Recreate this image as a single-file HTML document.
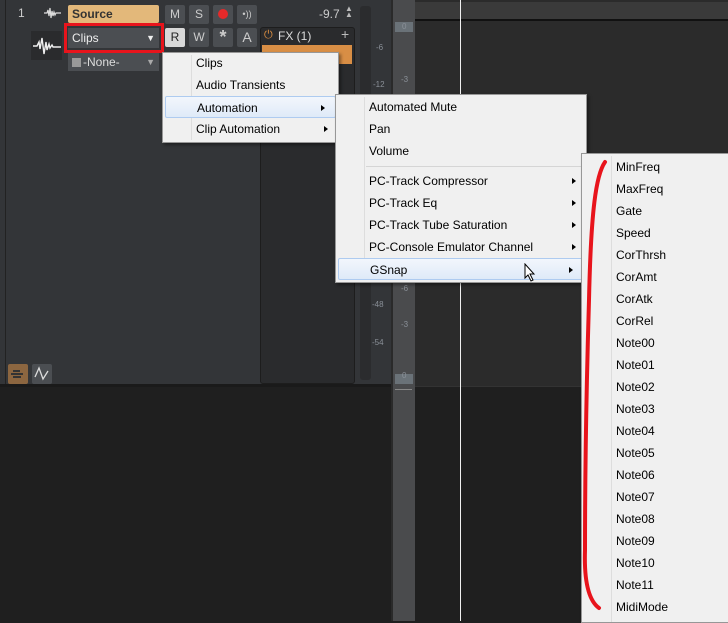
<!DOCTYPE html>
<html><head><style>
*{margin:0;padding:0;box-sizing:border-box}
body{width:728px;height:621px;background:#1f1f1f;position:relative;overflow:hidden;font-family:"Liberation Sans","Noto Sans CJK KR",sans-serif}
.a{position:absolute}
.menu{position:absolute;background:#f0f0f0;border:1px solid #979797;box-shadow:2px 2px 3px rgba(0,0,0,.4);font-size:12px;color:#000}
.menu .it{position:absolute;left:0;right:0;height:22px;line-height:22px}
.menu .hl{background:linear-gradient(#f2f6fc,#dfeaf8);border:1px solid #aecbf0;border-radius:2px}
.arr{position:absolute;right:10px;top:8px;width:0;height:0;border-left:4px solid #000;border-top:3.5px solid transparent;border-bottom:3.5px solid transparent}
.btn{position:absolute;width:20px;height:19px;background:#4b4e52;color:#ccc;font-size:12px;text-align:center;line-height:19px;border-radius:2px}
.sc{position:absolute;font-size:8px;color:#8a9098}
</style></head><body>
<div class="a" style="left:0;top:0;width:391px;height:386px;background:#333538"></div>
<div class="a" style="left:5px;top:0;width:1px;height:386px;background:#222"></div>
<div class="a" style="left:0;top:384px;width:391px;height:3px;background:#1a1a1a"></div>
<div class="a" style="left:18px;top:6px;color:#ccc;font-size:12px">1</div>
<svg class="a" style="left:44px;top:6px" width="18" height="14" viewBox="0 0 18 14"><path d="M0 7h3l1-3 1 6 1-8 1 10 1-7 1 5 1-4 1 3 1-2h5" stroke="#ddd" fill="none" stroke-width="1.2"/></svg>
<div class="a" style="left:68px;top:5px;width:91px;height:18px;background:#e3b87a;border-radius:2px;font-size:12px;font-weight:bold;color:#333;line-height:18px;padding-left:4px">Source</div>
<div class="btn" style="left:165px;top:5px">M</div>
<div class="btn" style="left:189px;top:5px">S</div>
<div class="btn" style="left:213px;top:5px"><span style="display:inline-block;width:10px;height:10px;border-radius:50%;background:#e52a2a;margin-top:4px"></span></div>
<div class="btn" style="left:237px;top:5px;font-size:9px">•))</div>
<div class="a" style="left:319px;top:7px;color:#ccc;font-size:12px">-9.7</div>
<div class="a" style="left:345px;top:6px;color:#bbb;font-size:8px;line-height:6px">▲<br>▲</div>
<div class="a" style="left:31px;top:31px;width:31px;height:29px;background:#2a2b2d"></div>
<svg class="a" style="left:33px;top:36px" width="28" height="20" viewBox="0 0 28 20"><path d="M0 10h4l2-4 1 7 2-11 2 16 2-12 1 8 2-6 1 4 2-3 1 2h8" stroke="#eee" fill="none" stroke-width="1.4"/></svg>
<div class="a" style="left:64px;top:23px;width:100px;height:30px;border:3px solid #e8141c"></div>
<div class="a" style="left:68px;top:28px;width:91px;height:20px;background:#4b4e52;color:#eee;font-size:12px;line-height:20px;padding-left:4px">Clips<span style="position:absolute;right:4px;font-size:9px">▼</span></div>
<div class="a" style="left:68px;top:53px;width:91px;height:18px;background:#4b4e52;color:#ddd;font-size:12px;line-height:18px;padding-left:4px"><span style="display:inline-block;width:9px;height:9px;background:#999;vertical-align:-1px;margin-right:2px"></span>-None-<span style="position:absolute;right:4px;font-size:9px;color:#aaa">▼</span></div>
<div class="btn" style="left:165px;top:28px;background:#d8d8d8;color:#222">R</div>
<div class="btn" style="left:189px;top:28px">W</div>
<div class="btn" style="left:213px;top:28px;font-size:18px;font-weight:bold">*</div>
<div class="btn" style="left:237px;top:28px;font-size:14px">A</div>
<div class="a" style="left:260px;top:27px;width:95px;height:357px;background:#2a2b2d;border:1px solid #1d1d1d;border-radius:3px"></div>
<div class="a" style="left:264px;top:29px;color:#e09040;font-size:11px">⏻</div>
<div class="a" style="left:278px;top:29px;color:#ddd;font-size:12px">FX (1)</div>
<div class="a" style="left:341px;top:26px;color:#bbb;font-size:14px">+</div>
<div class="a" style="left:262px;top:45px;width:90px;height:19px;background:#d88e45"></div>
<div class="a" style="left:360px;top:6px;width:11px;height:374px;background:#2b2c2e;border-radius:3px"></div>
<div class="sc" style="left:376px;top:43px">-6</div>
<div class="sc" style="left:373px;top:80px">-12</div>
<div class="sc" style="left:372px;top:300px">-48</div>
<div class="sc" style="left:372px;top:338px">-54</div>
<div class="a" style="left:8px;top:364px;width:20px;height:20px;background:#8c6640;border-radius:2px"></div>
<svg class="a" style="left:8px;top:364px" width="20" height="20"><path d="M5 7h7M3 10h12M5 13h8" stroke="#333" stroke-width="2"/></svg>
<div class="a" style="left:32px;top:364px;width:20px;height:20px;background:#4b4e52;border-radius:2px"></div>
<svg class="a" style="left:32px;top:364px" width="20" height="20"><path d="M3 13l4-9 4 11 5-8" stroke="#ddd" fill="none" stroke-width="1.3"/></svg>
<div class="a" style="left:391px;top:0;width:2px;height:621px;background:#2a2a2a"></div>
<div class="a" style="left:393px;top:0;width:22px;height:621px;background:#4a4b4d"></div>
<div class="a" style="left:395px;top:22px;width:18px;height:10px;background:#6a7278"></div>
<div class="a" style="left:395px;top:374px;width:18px;height:10px;background:#6a7278"></div>
<div class="a" style="left:395px;top:389px;width:17px;height:1px;background:#888"></div>
<div class="sc" style="left:402px;top:22px">0</div>
<div class="sc" style="left:401px;top:75px">-3</div>
<div class="sc" style="left:401px;top:284px">-6</div>
<div class="sc" style="left:401px;top:320px">-3</div>
<div class="sc" style="left:402px;top:371px">0</div>
<div class="a" style="left:415px;top:0;width:313px;height:386px;background:#2b2b2b"></div>
<div class="a" style="left:415px;top:2px;width:313px;height:17px;background:#3a3a3a"></div>
<div class="a" style="left:415px;top:19px;width:313px;height:2px;background:#111"></div>
<div class="a" style="left:415px;top:386px;width:313px;height:1px;background:#333"></div>
<div class="a" style="left:460px;top:0;width:1px;height:621px;background:#f0f0f0"></div>
<div class="menu" style="left:162px;top:52px;width:177px;height:91px">
<div class="a" style="left:28px;top:2px;width:1px;height:85px;background:#ddd"></div>
<div class="it" style="top:-1px;padding-left:33px">Clips</div>
<div class="it" style="top:21px;padding-left:33px">Audio Transients</div>
<div class="it hl" style="top:43px;left:2px;right:2px;padding-left:31px">Automation<div class="arr"></div></div>
<div class="it" style="top:65px;padding-left:33px">Clip Automation<div class="arr" style="right:10px"></div></div>
</div>
<div class="menu" style="left:335px;top:94px;width:252px;height:189px">
<div class="a" style="left:28px;top:2px;width:1px;height:183px;background:#ddd"></div>
<div class="it" style="top:1px;padding-left:33px">Automated Mute</div>
<div class="it" style="top:23px;padding-left:33px">Pan</div>
<div class="it" style="top:45px;padding-left:33px">Volume</div>
<div class="a" style="left:30px;right:2px;top:71px;height:1px;background:#d5d5d5"></div>
<div class="it" style="top:75px;padding-left:33px">PC-Track Compressor<div class="arr"></div></div>
<div class="it" style="top:97px;padding-left:33px">PC-Track Eq<div class="arr"></div></div>
<div class="it" style="top:119px;padding-left:33px">PC-Track Tube Saturation<div class="arr"></div></div>
<div class="it" style="top:141px;padding-left:33px">PC-Console Emulator Channel<div class="arr"></div></div>
<div class="it hl" style="top:163px;left:2px;right:2px;padding-left:31px">GSnap<div class="arr"></div></div>
</div>
<svg class="a" style="left:524px;top:263px" width="14" height="20"><path d="M1 1v14l3-3 3 6 2-1-3-6h4z" fill="#fff" stroke="#000"/></svg>
<div class="menu" style="left:581px;top:153px;width:147px;height:470px;border-right:none">
<div class="a" style="left:29px;top:2px;width:1px;height:466px;background:#ddd"></div>
<div class="it" style="top:2px;padding-left:34px">MinFreq</div>
<div class="it" style="top:24px;padding-left:34px">MaxFreq</div>
<div class="it" style="top:46px;padding-left:34px">Gate</div>
<div class="it" style="top:68px;padding-left:34px">Speed</div>
<div class="it" style="top:90px;padding-left:34px">CorThrsh</div>
<div class="it" style="top:112px;padding-left:34px">CorAmt</div>
<div class="it" style="top:134px;padding-left:34px">CorAtk</div>
<div class="it" style="top:156px;padding-left:34px">CorRel</div>
<div class="it" style="top:178px;padding-left:34px">Note00</div>
<div class="it" style="top:200px;padding-left:34px">Note01</div>
<div class="it" style="top:222px;padding-left:34px">Note02</div>
<div class="it" style="top:244px;padding-left:34px">Note03</div>
<div class="it" style="top:266px;padding-left:34px">Note04</div>
<div class="it" style="top:288px;padding-left:34px">Note05</div>
<div class="it" style="top:310px;padding-left:34px">Note06</div>
<div class="it" style="top:332px;padding-left:34px">Note07</div>
<div class="it" style="top:354px;padding-left:34px">Note08</div>
<div class="it" style="top:376px;padding-left:34px">Note09</div>
<div class="it" style="top:398px;padding-left:34px">Note10</div>
<div class="it" style="top:420px;padding-left:34px">Note11</div>
<div class="it" style="top:442px;padding-left:34px">MidiMode</div>
</div>
<svg class="a" style="left:580px;top:150px" width="40" height="471"><path d="M25 12C16 25 11 60 9 150 6 250 5 330 5 400 4 430 8 450 19 458" stroke="#e8141c" stroke-width="4" fill="none" stroke-linecap="round"/></svg>
</body></html>
